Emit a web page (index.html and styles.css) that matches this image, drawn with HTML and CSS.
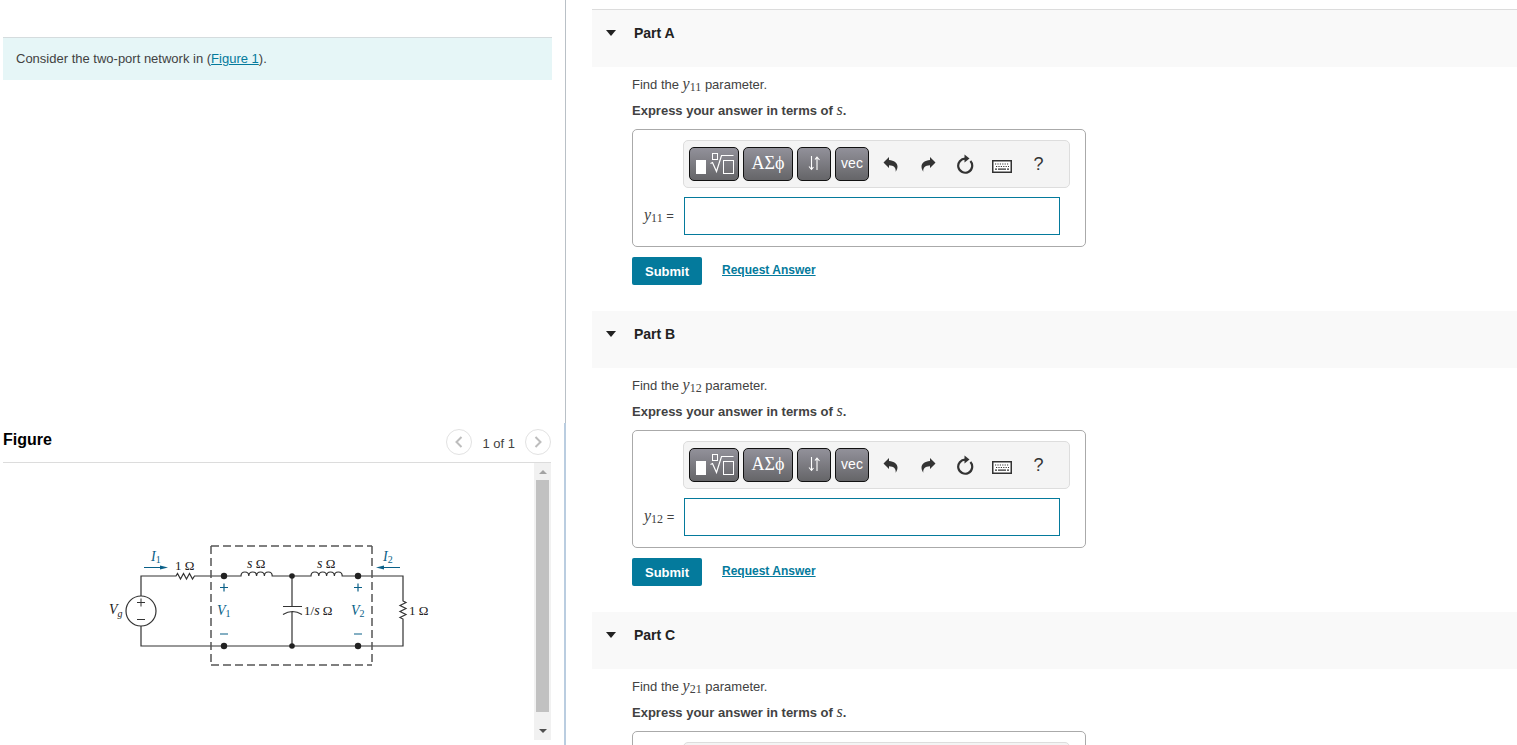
FILE: index.html
```html
<!DOCTYPE html>
<html lang="en">
<head>
<meta charset="utf-8">
<title>Two-port network</title>
<link rel="stylesheet" href="styles.css">
</head>
<body>
<svg class="sprite" aria-hidden="true">
  <symbol id="i-root" viewBox="0 0 38 24">
    <rect x="0" y="9" width="10" height="14" fill="#fff"/>
    <rect x="16.500" y="2.500" width="5" height="6" fill="none" stroke="#fff"/>
    <path d="M14.500 12.500l2-1 4 9 5-16h12" fill="none" stroke="#fff" stroke-width="1.200"/>
    <rect x="27.500" y="9.500" width="10" height="13" fill="none" stroke="#fff"/>
  </symbol>
  <symbol id="i-updown" viewBox="0 0 14 18">
    <path d="M4.500 2v13.500M2 12.500l2.500 3 2-2.500M10 16V3M8 5.500l2-2.500 2.500 3" fill="none" stroke="#fff" stroke-width="1.100"/>
  </symbol>
  <symbol id="i-undo" viewBox="0 0 16 16">
    <path d="M0.500 6.500L6 1v3c5 .3 8.500 3 8.500 6.500 0 2-.8 3.900-1.800 5.200.4-3.800-1.700-6.200-6.700-6.400V12z" fill="#333"/>
  </symbol>
  <symbol id="i-redo" viewBox="0 0 16 16">
    <path d="M15.500 6.500L10 1v3c-5 .3-8.500 3-8.500 6.500 0 2 .8 3.900 1.800 5.200-.4-3.800 1.700-6.200 6.700-6.400V12z" fill="#333"/>
  </symbol>
  <symbol id="i-reset" viewBox="0 0 18 20">
    <path d="M14.400 7A7 7 0 1 1 9.500 4.700" fill="none" stroke="#333" stroke-width="2.200"/>
    <path d="M8.500 0.500l5 4-5 4z" fill="#333"/>
  </symbol>
  <symbol id="i-keys" viewBox="0 0 20 13">
    <rect x="0.750" y="0.750" width="18.500" height="11.500" fill="#fff" stroke="#333" stroke-width="1.500"/>
    <path d="M3 4h14M4 6.500h13" stroke="#333" stroke-width="1.200" stroke-dasharray="1.200 1.200"/>
    <path d="M3 9.200h2M6 9.200h8M15 9.200h2" stroke="#333" stroke-width="1.300"/>
  </symbol>
</svg>
<div class="page">
  <aside class="side">
    <p class="intro">Consider the two-port network in (<a href="#figure">Figure 1</a>).</p>
    <section class="figure" id="figure">
      <header class="figure-head">
        <h2>Figure</h2>
        <button class="round" aria-label="Previous figure"><svg width="8" height="12" viewBox="0 0 8 12"><path d="M6.500 1l-5 5 5 5"/></svg></button>
        <span class="count">1 of 1</span>
        <button class="round" aria-label="Next figure"><svg width="8" height="12" viewBox="0 0 8 12"><path d="M1.500 1l5 5-5 5"/></svg></button>
      </header>
      <div class="viewport">
        <div class="canvas">
          <svg class="circuit" width="340" height="130" viewBox="100 540 340 130" role="img" aria-label="Two-port network circuit">
            <g class="wire">
              <path d="M141 596V576H176l1.500-2.500 3 5.500 3-5.500 3 5.500 3-5.500 3 5.500 2-3H241q0-4 3.900-4t3.900 4q0-4 3.900-4t3.900 4q0-4 3.900-4t3.900 4q0-4 3.900-4t3.900 4H311q0-4 3.900-4t3.900 4q0-4 3.900-4t3.900 4q0-4 3.900-4t3.900 4q0-4 3.900-4t3.900 4H403v25l3 1.500-6 3 6 3-6 3 6 3-6 3 3 1.500V646H141V626"/>
              <path d="M292 576V606M283 606.500H302M283 614.500q9.500-6 19 0M292 612V646"/>
              <circle cx="141" cy="611" r="15"/>
              <path d="M137 602.500h8M141 598.500v8M137 619.500h8" stroke-width="1"/>
            </g>
            <path class="dash" d="M211 546H372M211 665H372"/>
            <path class="dash" d="M211 546V665M372 546V665"/>
            <g fill="#222"><circle cx="224" cy="576" r="3.200"/><circle cx="292" cy="576" r="2.800"/><circle cx="358" cy="576" r="3.200"/><circle cx="224" cy="646" r="3.200"/><circle cx="292" cy="646" r="2.800"/><circle cx="358" cy="646" r="3.200"/></g>
            <path class="port" d="M220 587.500h8M224 583.500v8M220 634h8M354 587.500h8M358 583.500v8M354 634h8M144 567.500h18M382 567.500h18"/>
            <path fill="#0a6088" d="M168 567.500l-8-2v4zM376 567.500l8-2v4z"/>
            <g class="blue">
              <text x="151" y="561"><tspan class="it">I</tspan><tspan class="sub" dy="2">1</tspan></text>
              <text x="383" y="561"><tspan class="it">I</tspan><tspan class="sub" dy="2">2</tspan></text>
              <text x="217" y="615"><tspan class="it">V</tspan><tspan class="sub" dy="2">1</tspan></text>
              <text x="351" y="615"><tspan class="it">V</tspan><tspan class="sub" dy="2">2</tspan></text>
            </g>
            <text x="109" y="614"><tspan class="it">V</tspan><tspan class="it sub" dy="3">g</tspan></text>
            <text x="175" y="570">1 Ω</text>
            <text x="247" y="568"><tspan class="it">s</tspan> Ω</text>
            <text x="317" y="568"><tspan class="it">s</tspan> Ω</text>
            <text x="304" y="615">1/<tspan class="it">s</tspan> Ω</text>
            <text x="409" y="615">1 Ω</text>
          </svg>
        </div>
        <div class="scrollbar" aria-hidden="true"><i class="up"></i><i class="thumb"></i><i class="down"></i></div>
      </div>
    </section>
  </aside>
  <main class="parts">
    <section class="part">
      <header class="part-head"><i class="caret"></i><h2>Part A</h2></header>
      <form class="part-body">
        <p>Find the <span class="math">y<sub>11</sub></span> parameter.</p>
        <p class="strong">Express your answer in terms of <span class="math">s</span>.</p>
        <div class="answer">
          <div class="tools">
            <button type="button" class="key wide" aria-label="Templates"><svg width="38" height="24"><use href="#i-root"/></svg></button>
            <button type="button" class="key wide greek">ΑΣϕ</button>
            <button type="button" class="key" aria-label="Arrows"><svg width="14" height="18"><use href="#i-updown"/></svg></button>
            <button type="button" class="key">vec</button>
            <span class="actions">
              <button type="button" aria-label="Undo"><svg width="16" height="16"><use href="#i-undo"/></svg></button>
              <button type="button" aria-label="Redo"><svg width="16" height="16"><use href="#i-redo"/></svg></button>
              <button type="button" aria-label="Reset"><svg width="18" height="20"><use href="#i-reset"/></svg></button>
              <button type="button" aria-label="Keyboard shortcuts"><svg class="low" width="20" height="13"><use href="#i-keys"/></svg></button>
              <button type="button">?</button>
            </span>
          </div>
          <div class="entry"><label for="a"><span class="math">y<sub>11</sub></span> =</label><input id="a" type="text"></div>
        </div>
        <div class="submit-row"><button type="button" class="submit">Submit</button><a href="#">Request Answer</a></div>
      </form>
    </section>
    <section class="part">
      <header class="part-head"><i class="caret"></i><h2>Part B</h2></header>
      <form class="part-body">
        <p>Find the <span class="math">y<sub>12</sub></span> parameter.</p>
        <p class="strong">Express your answer in terms of <span class="math">s</span>.</p>
        <div class="answer">
          <div class="tools">
            <button type="button" class="key wide" aria-label="Templates"><svg width="38" height="24"><use href="#i-root"/></svg></button>
            <button type="button" class="key wide greek">ΑΣϕ</button>
            <button type="button" class="key" aria-label="Arrows"><svg width="14" height="18"><use href="#i-updown"/></svg></button>
            <button type="button" class="key">vec</button>
            <span class="actions">
              <button type="button" aria-label="Undo"><svg width="16" height="16"><use href="#i-undo"/></svg></button>
              <button type="button" aria-label="Redo"><svg width="16" height="16"><use href="#i-redo"/></svg></button>
              <button type="button" aria-label="Reset"><svg width="18" height="20"><use href="#i-reset"/></svg></button>
              <button type="button" aria-label="Keyboard shortcuts"><svg class="low" width="20" height="13"><use href="#i-keys"/></svg></button>
              <button type="button">?</button>
            </span>
          </div>
          <div class="entry"><label for="b"><span class="math">y<sub>12</sub></span> =</label><input id="b" type="text"></div>
        </div>
        <div class="submit-row"><button type="button" class="submit">Submit</button><a href="#">Request Answer</a></div>
      </form>
    </section>
    <section class="part">
      <header class="part-head"><i class="caret"></i><h2>Part C</h2></header>
      <form class="part-body">
        <p>Find the <span class="math">y<sub>21</sub></span> parameter.</p>
        <p class="strong">Express your answer in terms of <span class="math">s</span>.</p>
        <div class="answer">
          <div class="tools"></div>
        </div>
      </form>
    </section>
  </main>
</div>
</body>
</html>
```
FILE: styles.css
```css
* { box-sizing: border-box; }
body {
  margin: 0;
  font: 13px/18px "Liberation Sans", Arial, sans-serif;
  color: #424242;
  background: #fff;
  overflow: hidden;
}
h2, p { margin: 0; }
button { font-family: inherit; padding: 0; cursor: pointer; }
a { color: #047a9c; }
.sprite { display: none; }
.page { display: grid; grid-template-columns: 566px 1fr; height: 100vh; }

.side {
  display: flex;
  flex-direction: column;
  min-height: 0;
  padding-top: 37px;
  background: linear-gradient(#b9c0c6, #b9c0c6) right / 1px 100% no-repeat;
}
.intro {
  margin: 0 14px 0 3px;
  padding: 12px 13px;
  border-top: 1px solid #d5dcde;
  background: #e6f6f7;
}
.figure {
  display: flex;
  flex-direction: column;
  height: 322px;
  margin-top: auto;
  padding: 0 13px 5px 3px;
  border-right: 2px solid #bacde0;
}
.figure-head {
  display: flex;
  align-items: center;
  height: 40px;
  border-bottom: 1px solid #dcdcdc;
}
.figure-head h2 { margin-right: auto; padding-bottom: 6px; font-size: 16px; color: #000; }
.round {
  display: grid;
  place-items: center;
  width: 26px;
  height: 26px;
  margin-bottom: 2px;
  border: 1px solid #e2e2e2;
  border-radius: 50%;
  background: #fff;
}
.round path { fill: none; stroke: #bdbdbd; stroke-width: 2; }
.count { padding: 2px 10px 0; }
.viewport { display: flex; flex: 1; min-height: 0; }
.canvas { display: grid; flex: 1; justify-content: center; align-content: start; padding: 77px 0 0 2px; }
.scrollbar { display: flex; flex-direction: column; align-items: center; width: 17px; background: #f1f1f1; }
.scrollbar .thumb { flex: 1; width: 13px; margin-bottom: 11px; background: #c1c1c1; }
.up, .down { border: 4px solid transparent; border-top: 0; }
.up { margin: 7px 0 6px; border-bottom-color: #a3a3a3; }
.down { margin: 6px 0 7px; border-top: 4px solid #505050; border-bottom: 0; }

.circuit text { font: 13px "Liberation Serif", "Times New Roman", serif; fill: #222; }
.circuit .blue text { fill: #0a6088; }
.circuit .it { font-style: italic; font-size: 14px; }
.circuit .sub { font-size: 10px; }
.wire { fill: none; stroke: #333; stroke-width: 1.200; }
.dash { fill: none; stroke: #555; stroke-width: 1.500; stroke-dasharray: 8 4; }
.port { fill: none; stroke: #0a6088; stroke-width: 1.200; }

.parts { min-width: 0; padding: 10px 0 0 26px; overflow: hidden; }
.part-head {
  display: flex;
  align-items: center;
  height: 57px;
  padding: 0 14px 12px;
  background: #f9f9f9;
}
.part:first-child .part-head { box-shadow: 0 -1px #dcdcdc; }
.part-head h2 { font-size: 14px; color: #222; }
.caret { margin-right: 18px; border: 5px solid transparent; border-top: 6px solid #222; border-bottom: 0; }
.part-body { height: 244px; padding: 9px 40px 0; }
.part-body p { height: 18px; margin-bottom: 8px; white-space: nowrap; }
.strong { font-weight: bold; }
.math { font: italic 16px/1 "Liberation Serif", "Times New Roman", serif; }
.math sub { font: 12px/1 "Liberation Serif", "Times New Roman", serif; vertical-align: -2px; }
.answer {
  width: 454px;
  max-width: 100%;
  height: 118px;
  margin-top: 9px;
  padding: 10px 15px 0 10px;
  border: 1px solid #aaa;
  border-radius: 5px;
}
.tools {
  display: flex;
  align-items: center;
  gap: 4px;
  height: 48px;
  margin-left: 40px;
  padding: 0 5px;
  border: 1px solid #ddd;
  border-radius: 5px;
  background: #f4f4f4;
}
.key {
  display: grid;
  place-items: center;
  width: 34px;
  height: 34px;
  padding-bottom: 2px;
  border: 1px solid #111;
  border-radius: 5px;
  background: linear-gradient(#92919a, #656568);
  color: #fff;
  font-size: 14px;
}
.key.wide { width: 50px; padding-left: 2px; }
.key.greek { padding-left: 0; font: 18px "Liberation Serif", serif; }
.actions { display: flex; margin-left: -1px; }
.actions button {
  display: grid;
  place-items: center;
  width: 37px;
  height: 34px;
  border: 0;
  background: none;
  color: #333;
  font-size: 18px;
}
.actions .low { margin-top: 5px; }
.entry { display: flex; align-items: center; margin-top: 9px; padding-right: 10px; }
.entry label { width: 41px; padding-left: 1px; white-space: nowrap; }
.entry input { flex: 1; min-width: 0; height: 38px; border: 1px solid #047a9c; background: #fff; }
.submit-row { display: flex; align-items: center; gap: 20px; margin-top: 10px; font-size: 12px; font-weight: bold; }
.submit-row a { padding-bottom: 2px; }
.submit {
  width: 70px;
  height: 28px;
  border: 0;
  border-radius: 2px;
  background: #047a9c;
  color: #fff;
  font-size: 13px;
  font-weight: bold;
}
```
